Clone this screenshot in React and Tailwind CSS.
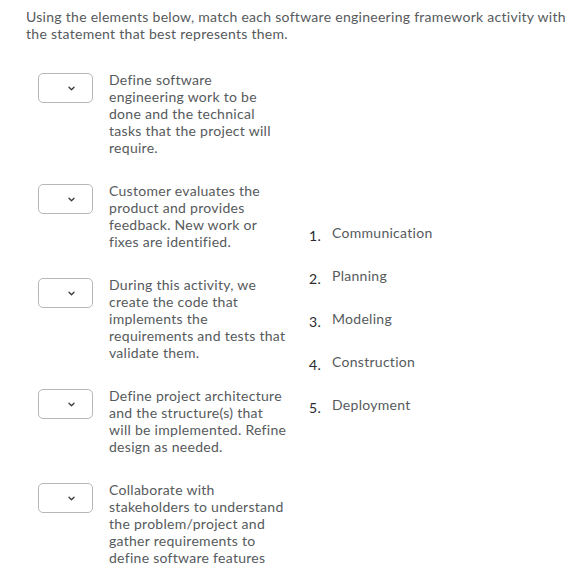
import React from "react";

const statements = [
  "Define software engineering work to be done and the technical tasks that the project will require.",
  "Customer evaluates the product and provides feedback. New work or fixes are identified.",
  "During this activity, we create the code that implements the requirements and tests that validate them.",
  "Define project architecture and the structure(s) that will be implemented. Refine design as needed.",
  "Collaborate with stakeholders to understand the problem/project and gather requirements to define software features",
];

const activities = ["Communication", "Planning", "Modeling", "Construction", "Deployment"];

function Chevron() {
  return (
    <svg width="7" height="5" viewBox="0 0 7 5" fill="none">
      <path d="M1 1.2l2.5 2.5 2.5-2.5" stroke="#3a3c3e" strokeWidth="1.4" strokeLinecap="round" strokeLinejoin="round" />
    </svg>
  );
}

function MatchSelect() {
  return (
    <button className="mt-[2.5px] w-[55px] h-[30px] shrink-0 rounded-[5px] border border-[#b5b8ba] bg-white flex items-center justify-end pr-[17px]">
      <Chevron />
    </button>
  );
}

export default function App() {
  return (
    <div
      className="bg-white min-h-[583px] pl-[26px] pt-[7.5px] text-[14px] leading-[17px] tracking-[0.28px] text-[#565a5c] [font-variant-ligatures:none]"
      style={{ fontFamily: "Lato, 'Open Sans', sans-serif" }}
    >
      <p className="w-[545px]">
        Using the elements below, match each software engineering framework activity with the statement that best represents them.
      </p>

      <div className="mt-[29px] pl-[12px] flex items-center">
        <div className="flex flex-col gap-[26px]">
          {statements.map((text, i) => (
            <div key={i} className="flex items-start gap-[16px]">
              <MatchSelect />
              <p className="w-[178px]">{text}</p>
            </div>
          ))}
        </div>

        <ol className="ml-[22px] flex flex-col gap-[26px]">
          {activities.map((name, i) => (
            <li key={name} className="flex items-start">
              <span className="w-[23px] translate-y-[3px] text-[#2a2b2c]">{i + 1}.</span>
              <span>{name}</span>
            </li>
          ))}
        </ol>
      </div>
    </div>
  );
}
